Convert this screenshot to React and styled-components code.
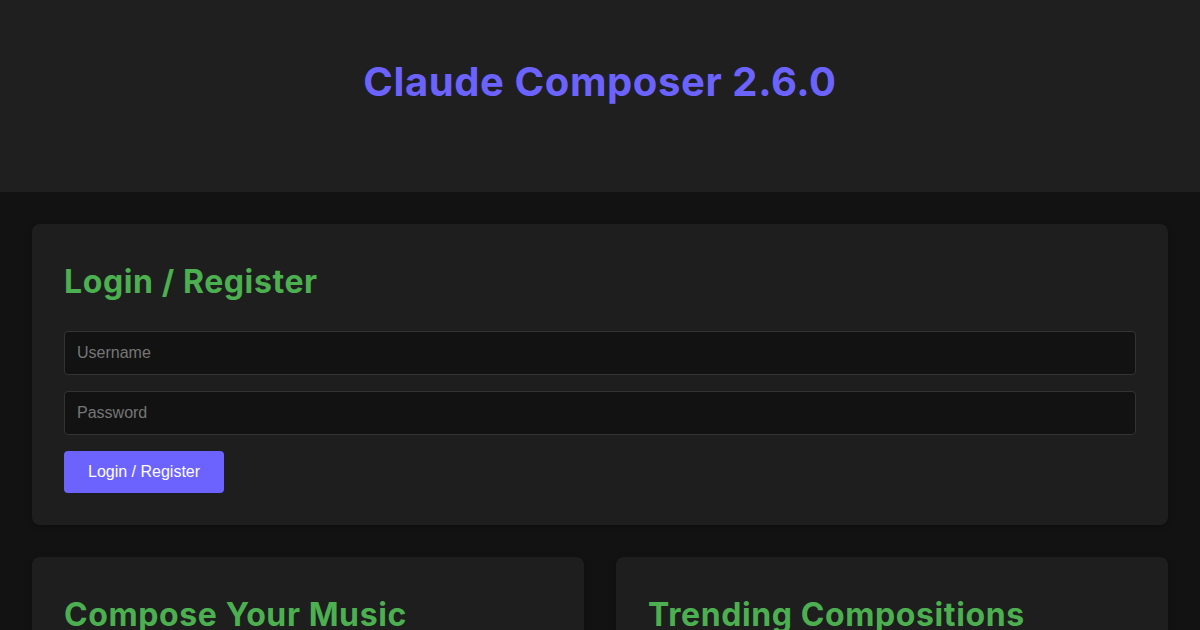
import React from 'react';
import styled, { createGlobalStyle } from 'styled-components';

const GlobalStyle = createGlobalStyle`
  * {
    box-sizing: border-box;
  }
  body {
    margin: 0;
    background: #121212;
    color: #e0e0e0;
    font-family: 'Liberation Sans', Arial, sans-serif;
  }
`;

const Header = styled.header`
  height: 192px;
  background: #1f1f1f;
  padding: 32px;
  text-align: center;
`;

const Title = styled.h1`
  margin: 26px 0 0;
  font-family: Inter, 'Noto Sans', sans-serif;
  font-weight: 700;
  font-size: 40px;
  line-height: 48px;
  letter-spacing: 0.6px;
  color: #6c63ff;
`;

const Main = styled.main`
  padding: 32px;
  display: flex;
  flex-direction: column;
  gap: 32px;
`;

const Card = styled.section`
  background: #1e1e1e;
  border-radius: 8px;
  padding: 32px;
  box-shadow: 0 2px 6px rgba(0, 0, 0, 0.25);
`;

const CardTitle = styled.h2`
  margin: 0 0 23px;
  font-family: Inter, 'Noto Sans', sans-serif;
  font-weight: 700;
  font-size: 32px;
  line-height: 52px;
  letter-spacing: 0.6px;
  color: #4caf50;
`;

const Form = styled.form`
  display: flex;
  flex-direction: column;
  align-items: flex-start;
  gap: 16px;
`;

const Input = styled.input`
  width: 100%;
  padding: 12px;
  background: #121212;
  border: 1px solid #333;
  border-radius: 4px;
  color: #e0e0e0;
  font-family: 'Liberation Sans', Arial, sans-serif;
  font-size: 16px;
  line-height: 18px;
  outline: none;

  &::placeholder {
    color: #767676;
  }
`;

const Button = styled.button`
  padding: 12px 24px;
  background: #6c63ff;
  border: none;
  border-radius: 4px;
  color: #fff;
  font-family: 'Liberation Sans', Arial, sans-serif;
  font-size: 16px;
  line-height: 18px;
  cursor: pointer;
`;

const Grid = styled.div`
  display: grid;
  grid-template-columns: 1fr 1fr;
  gap: 32px;
`;

const TextArea = styled.textarea`
  width: 100%;
  height: 160px;
  padding: 12px;
  background: #121212;
  border: 1px solid #333;
  border-radius: 4px;
  color: #e0e0e0;
  font-family: 'Liberation Sans', Arial, sans-serif;
  font-size: 16px;
  resize: none;
`;

export default function App() {
  return (
    <>
      <GlobalStyle />
      <Header>
        <Title>Claude Composer 2.6.0</Title>
      </Header>
      <Main>
        <Card>
          <CardTitle>Login / Register</CardTitle>
          <Form onSubmit={(e) => e.preventDefault()}>
            <Input type="text" placeholder="Username" />
            <Input type="password" placeholder="Password" />
            <Button type="submit">Login / Register</Button>
          </Form>
        </Card>
        <Grid>
          <Card>
            <CardTitle>Compose Your Music</CardTitle>
            <Form onSubmit={(e) => e.preventDefault()}>
              <TextArea placeholder="Describe your composition..." />
              <Button type="submit">Compose</Button>
            </Form>
          </Card>
          <Card>
            <CardTitle>Trending Compositions</CardTitle>
          </Card>
        </Grid>
      </Main>
    </>
  );
}
